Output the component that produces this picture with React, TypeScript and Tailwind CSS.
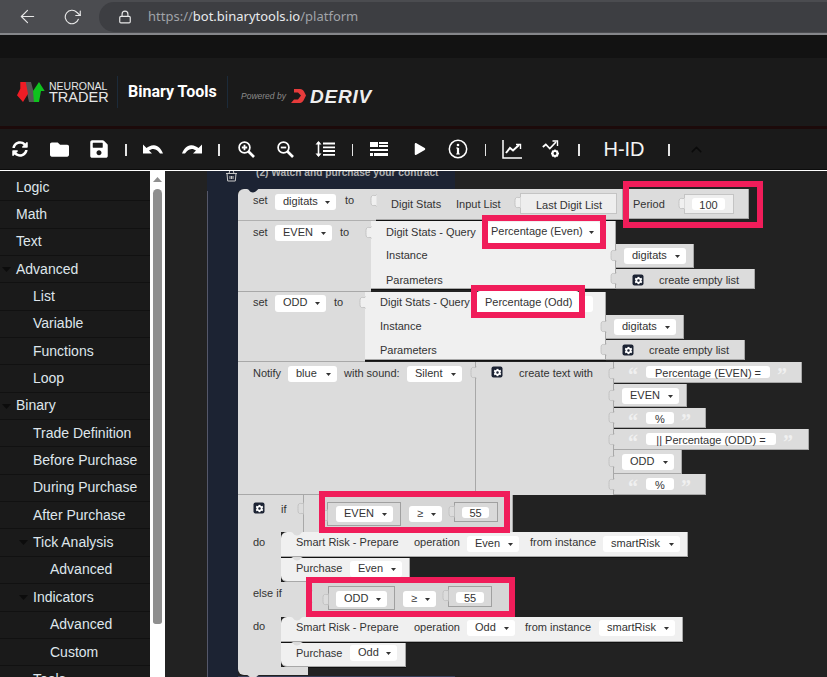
import React from "react";
import { FaSyncAlt, FaFolder, FaSave, FaCog, FaPlay } from "react-icons/fa";
import { FiArrowLeft, FiRotateCw, FiLock, FiChevronUp } from "react-icons/fi";

const OX = 165;
const OY = 171;

type Rect = { x: number; y: number; w: number; h: number; c: string };
const GREY = "bg-[#dcdcdc] border-r border-b border-[#a8a8a8]";
const LIGHT = "bg-[#f0f0f0] border-r border-b border-[#a8a8a8] shadow-[0_1px_0_#111]";
const PALE = "bg-[#eeeeee] border border-[#c4c4c4]";
const MID = "bg-[#d9d9d9] border border-[#a0a0a0]";
const SHADE = "bg-[#d6d6d6]";

const rects: Rect[] = [
  { x: 238, y: 189, w: 138, h: 32, c: "bg-[#dcdcdc] rounded-tl-[6px] border-b border-[#b0b0b0]" },
  { x: 376, y: 189, w: 247, h: 31, c: GREY + " shadow-[0_1px_0_#111]" },
  { x: 623, y: 189, w: 126, h: 30, c: GREY },
  { x: 520, y: 193, w: 97, h: 21, c: PALE },
  { x: 684, y: 194, w: 50, h: 20, c: PALE },
  { x: 238, y: 221, w: 133, h: 71, c: "bg-[#dcdcdc] border-b border-[#a8a8a8]" },
  { x: 371, y: 221, w: 245, h: 68, c: LIGHT },
  { x: 616, y: 244, w: 78, h: 24, c: GREY },
  { x: 616, y: 269, w: 139, h: 20, c: GREY },
  { x: 238, y: 292, w: 127, h: 70, c: "bg-[#dcdcdc] border-b border-[#a8a8a8]" },
  { x: 365, y: 292, w: 241, h: 68, c: LIGHT },
  { x: 606, y: 315, w: 78, h: 24, c: GREY },
  { x: 606, y: 340, w: 139, h: 20, c: GREY },
  { x: 238, y: 362, w: 238, h: 133, c: "bg-[#dcdcdc] border-r border-b border-[#a8a8a8]" },
  { x: 476, y: 362, w: 138, h: 133, c: "bg-[#dcdcdc] border-r border-[#a8a8a8]" },
  { x: 614, y: 362, w: 188, h: 21, c: GREY },
  { x: 614, y: 384, w: 73, h: 23, c: GREY },
  { x: 614, y: 408, w: 92, h: 20, c: GREY },
  { x: 614, y: 429, w: 195, h: 21, c: GREY },
  { x: 614, y: 450, w: 68, h: 24, c: GREY },
  { x: 614, y: 474, w: 92, h: 21, c: GREY },
  { x: 238, y: 495, w: 43, h: 180, c: "bg-[#dcdcdc] rounded-bl-[6px]" },
  { x: 281, y: 495, w: 22, h: 37, c: "bg-[#dcdcdc]" },
  { x: 303, y: 495, w: 210, h: 37, c: "bg-[#dcdcdc] border-l border-r border-[#a8a8a8]" },
  { x: 325, y: 497, w: 179, h: 30, c: SHADE },
  { x: 327, y: 502, w: 74, h: 24, c: MID },
  { x: 454, y: 502, w: 44, h: 20, c: MID },
  { x: 281, y: 557, w: 129, h: 25, c: LIGHT + " rounded-bl-[6px]" },
  { x: 281, y: 532, w: 407, h: 25, c: LIGHT + " rounded-tl-[6px]" },
  { x: 281, y: 582, w: 30, h: 35, c: "bg-[#dcdcdc]" },
  { x: 312, y: 583, w: 197, h: 28, c: SHADE },
  { x: 328, y: 586, w: 67, h: 24, c: MID },
  { x: 448, y: 586, w: 44, h: 21, c: MID },
  { x: 281, y: 642, w: 125, h: 25, c: LIGHT + " rounded-bl-[6px]" },
  { x: 281, y: 617, w: 402, h: 25, c: LIGHT + " rounded-tl-[6px]" },
  { x: 281, y: 667, w: 27, h: 8, c: "bg-[#dcdcdc]" },
];

type Fld = { x: number; y: number; w: number; h: number; t: string; tx?: number; arrow?: boolean; center?: boolean };
const fields: Fld[] = [
  { x: 275, y: 194, w: 61, h: 16, t: "digitats", arrow: true },
  { x: 692, y: 198, w: 33, h: 12, t: "100", center: true },
  { x: 275, y: 225, w: 57, h: 16, t: "EVEN", arrow: true },
  { x: 488, y: 222, w: 112, h: 21, t: "Percentage (Even)", tx: 3, arrow: true },
  { x: 624, y: 248, w: 62, h: 16, t: "digitats", arrow: true },
  { x: 275, y: 295, w: 51, h: 17, t: "ODD", arrow: true },
  { x: 579, y: 296, w: 13, h: 16, t: "" },
  { x: 477, y: 291, w: 102, h: 25, t: "Percentage (Odd)", tx: 8 },
  { x: 614, y: 319, w: 62, h: 16, t: "digitats", arrow: true },
  { x: 288, y: 366, w: 49, h: 16, t: "blue", arrow: true },
  { x: 407, y: 366, w: 55, h: 16, t: "Silent", arrow: true },
  { x: 646, y: 366, w: 124, h: 12, t: "Percentage (EVEN) =", center: true },
  { x: 622, y: 388, w: 57, h: 16, t: "EVEN", arrow: true },
  { x: 646, y: 412, w: 28, h: 12, t: "%", center: true },
  { x: 646, y: 433, w: 130, h: 12, t: "|| Percentage (ODD) =", center: true },
  { x: 622, y: 454, w: 52, h: 16, t: "ODD", arrow: true },
  { x: 646, y: 478, w: 28, h: 12, t: "%", center: true },
  { x: 336, y: 506, w: 57, h: 16, t: "EVEN", arrow: true },
  { x: 409, y: 506, w: 33, h: 16, t: "≥", arrow: true },
  { x: 462, y: 507, w: 27, h: 11, t: "55", center: true },
  { x: 467, y: 536, w: 52, h: 16, t: "Even", arrow: true },
  { x: 603, y: 536, w: 77, h: 16, t: "smartRisk", arrow: true },
  { x: 350, y: 561, w: 52, h: 16, t: "Even", arrow: true },
  { x: 336, y: 591, w: 51, h: 16, t: "ODD", arrow: true },
  { x: 403, y: 591, w: 33, h: 16, t: "≥", arrow: true },
  { x: 456, y: 592, w: 28, h: 11, t: "55", center: true },
  { x: 467, y: 620, w: 48, h: 16, t: "Odd", arrow: true },
  { x: 599, y: 620, w: 76, h: 16, t: "smartRisk", arrow: true },
  { x: 350, y: 645, w: 47, h: 16, t: "Odd", arrow: true },
];

const labels: [number, number, string][] = [
  [253, 200, "set"], [345, 200, "to"], [391, 204, "Digit Stats"], [456, 204, "Input List"], [536, 205, "Last Digit List"], [633, 204, "Period"],
  [253, 232, "set"], [340, 232, "to"], [386, 232, "Digit Stats - Query"], [386, 255, "Instance"], [386, 280, "Parameters"], [659, 280, "create empty list"],
  [253, 302, "set"], [334, 302, "to"], [380, 302, "Digit Stats - Query"], [380, 326, "Instance"], [380, 350, "Parameters"], [649, 350, "create empty list"],
  [253, 373, "Notify"], [344, 373, "with sound:"], [519, 373, "create text with"],
  [281, 509, "if"], [253, 542, "do"], [296, 542, "Smart Risk - Prepare"], [414, 542, "operation"], [530, 542, "from instance"], [296, 568, "Purchase"],
  [253, 593, "else if"], [253, 626, "do"], [296, 627, "Smart Risk - Prepare"], [414, 627, "operation"], [525, 627, "from instance"], [296, 653, "Purchase"],
];

const tabs: [number, number][] = [
  [376, 194], [520, 196], [684, 197], [371, 226], [616, 249], [616, 272], [365, 296], [606, 320], [606, 343],
  [476, 366], [614, 367], [614, 389], [614, 411], [614, 433], [614, 455], [614, 478], [303, 502], [327, 509], [454, 505], [312, 590], [328, 593], [448, 589],
];
const greyTabColumns = [606, 614, 616, 476, 303, 454, 327, 328, 448, 312];
const notches: [number, number][] = [[247, 189], [247, 221], [247, 292], [247, 362], [247, 495], [291, 532], [291, 557], [291, 617], [291, 642], [247, 675]];
const gears: [number, number][] = [[638, 280], [628, 350], [497, 372], [259, 508]];
const quotes: [number, number][] = [[633, 375], [782, 375], [633, 421], [686, 421], [633, 442], [788, 442], [633, 487], [686, 487]];
const reds: [number, number, number, number][] = [
  [623, 181, 140, 47], [482, 215, 124, 34], [471, 285, 114, 33], [319, 491, 191, 42], [306, 577, 209, 40],
];

function Arrow() {
  return (
    <svg width="5" height="3" viewBox="0 0 5 3" className="shrink-0">
      <path d="M0 0h5L2.5 3z" fill="#333" />
    </svg>
  );
}

function Field({ f }: { f: Fld }) {
  return (
    <div
      className={
        "absolute flex items-center rounded-[3px] bg-white text-[11px] leading-none text-[#333] whitespace-nowrap " +
        (f.center ? "justify-center" : "justify-between")
      }
      style={{ left: f.x - OX, top: f.y - OY, width: f.w, height: f.h, paddingLeft: f.center ? 0 : f.tx ?? 8, paddingRight: f.center ? 0 : 6 }}
    >
      <span className={f.center ? "translate-y-[1px]" : "-translate-y-[1px]"}>{f.t}</span>
      {f.arrow ? <Arrow /> : null}
    </div>
  );
}

function Canvas() {
  return (
    <div className="relative flex-1 overflow-hidden bg-[#222222] font-['Liberation_Sans',sans-serif]">
      <div className="absolute left-[42px] top-0 h-full w-[31px] border-l border-[#55586a] bg-[#1c2333]" />
      <div className="absolute left-[42px] top-0 h-[20px] w-[248px] bg-[#1c2333]" />
      <div className="absolute left-[73px] top-[505px] h-[1px] w-[217px] bg-[#39405a]" />
      <svg width="13" height="12" viewBox="0 0 13 12" fill="none" stroke="#c8c8c8" className="absolute left-[60px] top-[-1px]">
        <path d="M1 3.500h11M2 3.500l.7 7.500h7.600l.7-7.500M4 3.500L5 0M9 3.500L8 0M5 6v3M6.500 6v3M8 6v3" />
      </svg>
      <span className="absolute left-[91px] top-[-5px] whitespace-nowrap text-[10.2px] font-bold leading-[14px] text-[#b0b0b0]">(2) Watch and purchase your contract</span>

      {rects.map((r, i) => (
        <div key={i} className={"absolute " + r.c} style={{ left: r.x - OX, top: r.y - OY, width: r.w, height: r.h }} />
      ))}

      {tabs.map(([x, y], i) => (
        <svg key={i} width="7" height="13" viewBox="0 0 7 13" className="absolute" style={{ left: x - OX - 6, top: y - OY }}>
          <path
            d="M6.5 0.5C6 2.5 4 1 2.5 1.5 1 2 1 3.5 1 6.500 1 9.500 1 11 2.500 11.500 4 12 6 10.500 6.500 12.500"
            fill={greyTabColumns.includes(x) ? "#dcdcdc" : "#f0f0f0"}
            stroke="#bcbcbc"
            strokeWidth="0.8"
          />
        </svg>
      ))}

      {notches.map(([x, y], i) => (
        <svg key={i} width="12" height="4" viewBox="0 0 12 4" className="absolute" style={{ left: x - OX, top: y - OY }}>
          <path d="M0 0C2 0 2.500 3.500 6 3.500 9.500 3.500 10 0 12 0z" fill={i === 0 ? "#1c2333" : "#dcdcdc"} />
        </svg>
      ))}

      {fields.map((f, i) => (
        <Field key={i} f={f} />
      ))}

      {labels.map(([x, y, t], i) => (
        <span key={i} className="absolute -translate-y-1/2 whitespace-nowrap text-[11px] leading-none text-[#333]" style={{ left: x - OX, top: y - OY }}>
          {t}
        </span>
      ))}

      {gears.map(([x, y], i) => (
        <span key={i} className="absolute flex h-[11px] w-[11px] -translate-x-1/2 -translate-y-1/2 items-center justify-center rounded-[2px] bg-[#1c2333]" style={{ left: x - OX, top: y - OY }}>
          <FaCog className="text-[8px] text-white" />
        </span>
      ))}

      {quotes.map(([x, y], i) => (
        <span key={i} className="absolute -translate-x-1/2 -translate-y-1/2 font-['Liberation_Serif',serif] text-[20px] font-bold leading-none text-[#f0f0f0]" style={{ left: x - OX, top: y - OY }}>
          {i % 2 === 0 ? "“" : "”"}
        </span>
      ))}

      {reds.map(([x, y, w, h], i) => (
        <div key={i} className="absolute border-[6px] border-[#f01d5a]" style={{ left: x - OX, top: y - OY, width: w, height: h }} />
      ))}
    </div>
  );
}

const tree: [string, number, boolean][] = [
  ["Logic", 0, false], ["Math", 0, false], ["Text", 0, false], ["Advanced", 0, true], ["List", 1, false], ["Variable", 1, false],
  ["Functions", 1, false], ["Loop", 1, false], ["Binary", 0, true], ["Trade Definition", 1, false], ["Before Purchase", 1, false],
  ["During Purchase", 1, false], ["After Purchase", 1, false], ["Tick Analysis", 1, true], ["Advanced", 2, false], ["Indicators", 1, true],
  ["Advanced", 2, false], ["Custom", 2, false], ["Tools", 1, true],
];

function Sidebar() {
  return (
    <div className="flex h-full shrink-0">
      <div className="h-full w-[150px] overflow-hidden bg-[#1a1a1a] pt-[3px] font-['Liberation_Sans',sans-serif]">
        {tree.map(([t, d, open], i) => (
          <div key={i} className="relative flex h-[27.35px] items-center border-b border-[#111] text-[14px] text-[#dfe6ec]">
            {open ? (
              <svg width="9" height="5" viewBox="0 0 9 5" className={d === 0 ? "absolute left-[2px] top-[11px]" : "absolute left-[19px] top-[11px]"}>
                <path d="M0 0h9L4.500 5z" fill="#0c0c0c" />
              </svg>
            ) : null}
            <span className={d === 0 ? "pl-[16px]" : d === 1 ? "pl-[33px]" : "pl-[50px]"}>{t}</span>
          </div>
        ))}
      </div>
      <div className="flex h-full w-[15px] flex-col items-center bg-white pt-[6px]">
        <svg width="9" height="5" viewBox="0 0 9 5">
          <path d="M0 5L4.500 0 9 5z" fill="#8f8f8f" />
        </svg>
        <div className="mt-[7px] h-[435px] w-[9px] rounded-[5px] rounded-b-[3px] bg-[#8f8f8f]" />
      </div>
    </div>
  );
}

function IconBox({ w = "w-[39.5px]", children }: { w?: string; children: React.ReactNode }) {
  return <div className={"flex h-full shrink-0 items-center justify-center " + w}>{children}</div>;
}
function Sep({ thin }: { thin?: boolean }) {
  return (
    <div className="flex h-full w-[14.5px] shrink-0 items-center justify-center pt-[2px]">
      <div className={(thin ? "w-[1px]" : "w-[2px]") + " h-[12px] bg-[#e4e4e4]"} />
    </div>
  );
}

function Zoom({ minus }: { minus?: boolean }) {
  return (
    <svg width="17" height="17" viewBox="0 0 17 17" fill="none" stroke="white">
      <circle cx="6.500" cy="6.500" r="5.400" strokeWidth="1.700" />
      <path d="M10.500 10.500L16 16" strokeWidth="2.600" />
      <path d={minus ? "M3.800 6.500h5.400" : "M3.800 6.500h5.400M6.500 3.800v5.400"} strokeWidth="1.800" />
    </svg>
  );
}

function Toolbar() {
  return (
    <div className="flex h-[40px] shrink-0 items-center bg-[#1a1a1a] text-white">
      <IconBox><FaSyncAlt className="text-[16px]" /></IconBox>
      <IconBox><FaFolder className="text-[19px]" /></IconBox>
      <IconBox><FaSave className="text-[20px]" /></IconBox>
      <Sep />
      <IconBox>
        <svg width="20" height="10" viewBox="0 0 20 10" fill="white">
          <path d="M0 0.500V9.500H9L6 6.500C8 5 10.500 4.500 12.500 5.500 14.500 6.500 16 8 17 9.500L20 9.500C18.500 5 15 1.500 11 1.200 8 1 5.500 2.500 3.500 4z" />
        </svg>
      </IconBox>
      <IconBox>
        <svg width="20" height="10" viewBox="0 0 20 10" fill="white">
          <path d="M20 0.500V9.500H11L14 6.500C12 5 9.500 4.500 7.500 5.500 5.500 6.500 4 8 3 9.500L0 9.500C1.500 5 5 1.500 9 1.200 12 1 14.500 2.500 16.500 4z" />
        </svg>
      </IconBox>
      <Sep />
      <IconBox><Zoom /></IconBox>
      <IconBox><Zoom minus /></IconBox>
      <IconBox>
        <svg width="20" height="18" viewBox="0 0 20 18" fill="none" stroke="white">
          <path d="M3.500 2v14" strokeWidth="1.600" />
          <path d="M0.500 4.500L3.500 1l3 3.500zM0.500 13.500L3.500 17l3-3.500z" fill="white" stroke="none" />
          <path d="M8 3.500h12M8 7.300h12M8 11h12M8 14.800h12" strokeWidth="1.800" />
        </svg>
      </IconBox>
      <Sep thin />
      <IconBox>
        <svg width="18" height="14" viewBox="0 0 18 14" fill="white">
          <path d="M0 0h8v5H0zM9 0h9v2H9zM9 3h9v2H9zM0 7h18v2H0zM0 11h3v3H0zM4 11h14v3H4z" />
        </svg>
      </IconBox>
      <IconBox><div className="pl-[3px]"><FaPlay className="text-[12px]" /></div></IconBox>
      <IconBox>
        <svg width="20" height="20" viewBox="0 0 20 20" fill="none" stroke="white">
          <circle cx="10" cy="10" r="8.700" strokeWidth="1.500" />
          <path d="M10 9v6" strokeWidth="2.200" />
          <path d="M8.200 9h2M8.200 15h3.600" strokeWidth="1.200" />
          <circle cx="10" cy="6" r="1.300" fill="white" stroke="none" />
        </svg>
      </IconBox>
      <Sep thin />
      <IconBox>
        <svg width="20" height="19" viewBox="0 0 20 19" fill="none" stroke="white" strokeWidth="1.500">
          <path d="M1 0v18h19" />
          <path d="M4 13l4-5 3 2.500L17 5" strokeWidth="2" />
          <path d="M14 4.500h4.500V9" strokeWidth="1.400" />
        </svg>
      </IconBox>
      <IconBox>
        <svg width="20" height="19" viewBox="0 0 20 19" fill="none" stroke="white" strokeWidth="1.700">
          <path d="M0.800 7l3-2.500 4 4L14 2" />
          <path d="M10.500 1h5v5" strokeWidth="1.400" />
          <circle cx="13" cy="13.500" r="2.500" strokeWidth="2.200" />
          <path d="M13 9.500v1.500M13 16v1.500M9 13.500h1.500M15.500 13.500H17M10.200 10.700l1 1M14.800 15.300l1 1M15.800 10.700l-1 1M11.200 15.300l-1 1" strokeWidth="1.600" />
        </svg>
      </IconBox>
      <Sep />
      <div className="flex h-full w-[76px] shrink-0 items-center justify-center font-['Liberation_Sans',sans-serif] text-[20px] text-[#f4f4f4]">H-ID</div>
      <Sep />
      <IconBox><FiChevronUp className="text-[17px] text-[#0a0a0a]" /></IconBox>
    </div>
  );
}

function Header() {
  return (
    <div className="flex h-[68px] shrink-0 items-center bg-[#1a1a1a] pl-[17px]">
      <svg width="30" height="21" viewBox="0 0 30 21" className="shrink-0">
        <path d="M7.700 0H14L19.300 20H12z" fill="#555" />
        <path d="M3.300 0H8.700L11 11.700 6 20 0 13.300 3.300 6.700z" fill="#ee1c25" />
        <path d="M22 0L27.700 9H24L22 20H17L16 9z" fill="#0fc21e" />
      </svg>
      <div className="ml-[2px] flex w-[68px] shrink-0 flex-col font-['Liberation_Sans',sans-serif] text-[#e6e6e6]">
        <span className="whitespace-nowrap text-[10.5px] leading-[10px]">NEURONAL</span>
        <span className="whitespace-nowrap text-[14.5px] leading-[13px]">TRADER</span>
      </div>
      <div className="h-[32px] w-[1px] shrink-0 bg-[#1c2b3a]" />
      <span className="ml-[10px] w-[99px] shrink-0 font-['Roboto',sans-serif] text-[16px] font-bold text-white">Binary Tools</span>
      <div className="h-[32px] w-[1px] shrink-0 bg-[#1c2b3a]" />
      <span className="ml-[13px] mt-[8px] w-[50px] shrink-0 whitespace-nowrap font-['Liberation_Sans',sans-serif] text-[8.5px] italic text-[#8a8a8a]">Powered by</span>
      <svg width="15" height="14" viewBox="0 0 15 14" className="mt-[7px] shrink-0">
        <path d="M3 0H9C11 0 12 1 13 2.500L15 6.500 12.500 11.500C11.500 13 10.500 14 9 14H0L3 10.500H7L10 6.500 7 3.500H3z" fill="#e63b3b" />
      </svg>
      <span className="ml-[4px] mt-[8px] font-['Liberation_Sans',sans-serif] text-[19px] font-bold italic leading-none tracking-[0.8px] text-[#eeeeee]">DERIV</span>
    </div>
  );
}

function BrowserBar() {
  return (
    <div className="flex h-[35px] shrink-0 items-center border-b-2 border-[#85868a] bg-[#4b4c50]">
      <IconBox w="w-[54px]"><FiArrowLeft className="text-[21px] text-[#e8e8e8]" strokeWidth={1.3} /></IconBox>
      <IconBox w="w-[35px]"><FiRotateCw className="text-[18px] text-[#e8e8e8]" strokeWidth={1.5} /></IconBox>
      <div className="ml-[10px] flex h-[30px] flex-1 items-center rounded-l-[15px] bg-[#3d3e42] pl-[19px]">
        <FiLock className="text-[14px] text-[#e8e8e8]" />
        <span className="ml-[16px] whitespace-nowrap font-['Noto_Sans',sans-serif] text-[13px] text-[#a0a3a8]">
          https://<span className="text-[#e8eaed]">bot.binarytools.io</span>/platform
        </span>
      </div>
    </div>
  );
}

export default function App() {
  return (
    <div className="flex h-[677px] w-[827px] flex-col overflow-hidden bg-[#121212]">
      <BrowserBar />
      <div className="h-[23px] shrink-0 bg-[#121212]" />
      <Header />
      <div className="h-[3px] shrink-0 bg-[#1c0a0a]" />
      <Toolbar />
      <div className="h-[1px] shrink-0 bg-[#0c0c0c]" />
      <div className="h-[1px] shrink-0 bg-white" />
      <div className="flex min-h-0 flex-1">
        <Sidebar />
        <Canvas />
      </div>
    </div>
  );
}
